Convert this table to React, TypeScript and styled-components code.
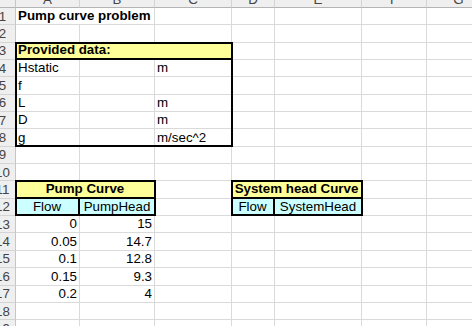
import React from "react";
import styled, { createGlobalStyle } from "styled-components";

const GlobalStyle = createGlobalStyle`
    html, body { margin:0;padding:0;width:472px;height:326px;overflow:hidden;background:#fff; }
    body { font-family:"Liberation Sans", Arial, sans-serif;font-size:13.33px;color:#000; }
`;

const COLS = ["A", "B", "C", "D", "E", "F", "G"];
const ROW_COUNT = 19;
const YELLOW = "#ffff99";
const CYAN = "#ccffff";

type Spec = {
    text: string;
    span?: number;
    bold?: boolean;
    align?: "left" | "center" | "right";
    fill?: string;
    thickBottom?: boolean;
    thickRight?: boolean;
};

const num = (text: string): Spec => ({ text, align: "right" });

const cells: Record<string, Spec> = {
    "1A": { text: "Pump curve problem", bold: true, span: 2 },
    "3A": { text: "Provided data:", bold: true, span: 3, fill: YELLOW, thickBottom: true },
    "4A": { text: "Hstatic" },
    "4C": { text: "m" },
    "5A": { text: "f" },
    "6A": { text: "L" },
    "6C": { text: "m" },
    "7A": { text: "D" },
    "7C": { text: "m" },
    "8A": { text: "g" },
    "8C": { text: "m/sec^2" },
    "11A": { text: "Pump Curve", bold: true, span: 2, align: "center", fill: YELLOW, thickBottom: true },
    "12A": { text: "Flow", align: "center", fill: CYAN, thickRight: true },
    "12B": { text: "PumpHead", align: "center", fill: CYAN },
    "11D": { text: "System head Curve", bold: true, span: 2, align: "center", fill: YELLOW, thickBottom: true },
    "12D": { text: "Flow", align: "center", fill: CYAN, thickRight: true },
    "12E": { text: "SystemHead", align: "center", fill: CYAN },
    "13A": num("0"), "13B": num("15"),
    "14A": num("0.05"), "14B": num("14.7"),
    "15A": num("0.1"), "15B": num("12.8"),
    "16A": num("0.15"), "16B": num("9.3"),
    "17A": num("0.2"), "17B": num("4"),
};

// outlined ranges: first row, first column index (0 = A), rows, columns
const frames = [
    { row: 3, col: 0, rows: 6, cols: 3 },
    { row: 11, col: 0, rows: 2, cols: 2 },
    { row: 11, col: 3, rows: 2, cols: 2 },
];

const App = () => {
    const body: React.ReactNode[] = [];
    for (let r = 1; r <= ROW_COUNT; r++) {
        body.push(
            <RowHead key={`h${r}`} $row={r + 1}>
                <RowNum>{r}</RowNum>
            </RowHead>
        );
        let c = 0;
        while (c < COLS.length) {
            const spec = cells[`${r}${COLS[c]}`];
            const span = spec?.span ?? 1;
            body.push(
                <Cell
                    key={`${r}${COLS[c]}`}
                    $row={r + 1}
                    $col={c + 2}
                    $span={span}
                    $bold={spec?.bold}
                    $align={spec?.align ?? "left"}
                    $fill={spec?.fill}
                    $thickBottom={spec?.thickBottom}
                    $thickRight={spec?.thickRight}
                >
                    {spec?.text}
                </Cell>
            );
            c += span;
        }
    }

    return (
        <>
            <GlobalStyle />
            <Sheet>
                <Corner />
                {COLS.map((l, i) => (
                    <ColHead key={l} $col={i + 2}>
                        <ColLetter>{l}</ColLetter>
                    </ColHead>
                ))}
                {body}
                {frames.map((f, i) => (
                    <Frame key={i} $row={f.row + 1} $col={f.col + 2} $rows={f.rows} $cols={f.cols} />
                ))}
            </Sheet>
        </>
    );
};

const Sheet = styled.div`
    display:grid;
    grid-template-columns:16px 64px 75px 77px 43px 87px 65px 64px;
    grid-template-rows:8px repeat(${ROW_COUNT}, 17.35px);
    width:491px;
`;

const Corner = styled.div`
    grid-column:1;grid-row:1;
    background:#efefef;border-right:1px solid #c6c6c6;border-bottom:1px solid #b4b4b4;
    box-sizing:border-box;
`;

const ColHead = styled.div<{ $col: number }>`
    grid-column:${p => p.$col};grid-row:1;
    display:flex;justify-content:center;overflow:hidden;
    background:#efefef;border-right:1px solid #d4d4d4;border-bottom:1px solid #b4b4b4;
    box-sizing:border-box;
`;

const ColLetter = styled.span`
    margin-top:-7px;line-height:13px;font-size:13.33px;color:#444;
`;

const RowHead = styled.div<{ $row: number }>`
    grid-column:1;grid-row:${p => p.$row};
    display:flex;align-items:center;overflow:hidden;
    background:#efefef;border-right:1px solid #c6c6c6;border-bottom:1px solid #d4d4d4;
    box-sizing:border-box;
`;

const RowNum = styled.span`
    display:flex;justify-content:center;width:5px;flex-shrink:0;
    white-space:nowrap;color:#444;line-height:15px;
`;

const Cell = styled.div<{
    $row: number;
    $col: number;
    $span: number;
    $bold?: boolean;
    $align: "left" | "center" | "right";
    $fill?: string;
    $thickBottom?: boolean;
    $thickRight?: boolean;
}>`
    grid-column:${p => p.$col} / span ${p => p.$span};grid-row:${p => p.$row};
    display:flex;align-items:flex-end;
    justify-content:${p => (p.$align === "left" ? "flex-start" : p.$align === "right" ? "flex-end" : "center")};
    box-sizing:border-box;min-width:0;padding:0 2px 1px 2px;
    white-space:nowrap;line-height:15px;
    font-weight:${p => (p.$bold ? 700 : 400)};
    background:${p => p.$fill ?? "#fff"};
    border-right:${p => (p.$thickRight ? "2px solid #000" : "1px solid #dadada")};
    border-bottom:${p => (p.$thickBottom ? "2px solid #000" : "1px solid #dadada")};
`;

const Frame = styled.div<{ $row: number; $col: number; $rows: number; $cols: number }>`
    grid-column:${p => p.$col} / span ${p => p.$cols};
    grid-row:${p => p.$row} / span ${p => p.$rows};
    margin:-1px -1px 0 -1px;
    border:2px solid #000;pointer-events:none;
`;

export default App;
